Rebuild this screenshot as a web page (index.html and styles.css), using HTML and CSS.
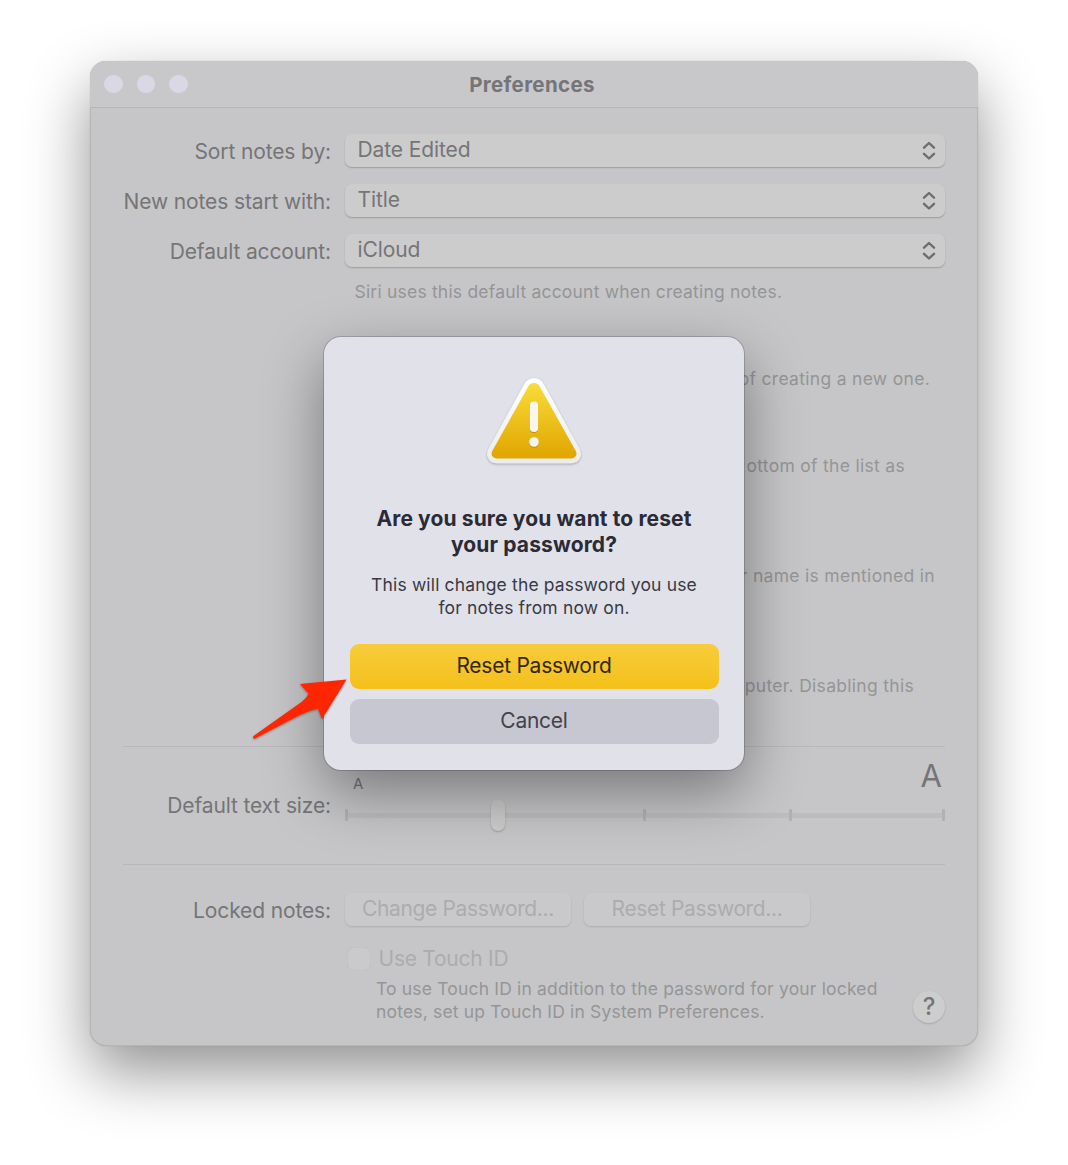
FILE: index.html
```
<!DOCTYPE html>
<html lang="en">
<head>
  <meta charset="UTF-8" />
  <meta name="viewport" content="width=device-width, initial-scale=1.0"/>
  <title>Preferences</title>
  <link rel="stylesheet" href="styles.css">
</head>
<body>

  <div class="window">
    <header class="titlebar">
      <div class="lights"><span></span><span></span><span></span></div>
      <h1>Preferences</h1>
    </header>

    <main class="content">
      <div class="row">
        <div class="label">Sort notes by:</div>
        <div class="select">
          <span>Date Edited</span>
          <svg width="14" height="20" viewBox="0 0 14 20"><path d="M2 6.700 7 2l5 4.700M2 12.800l5 4.700 5-4.700"/></svg>
        </div>
      </div>
      <div class="row">
        <div class="label">New notes start with:</div>
        <div class="select">
          <span>Title</span>
          <svg width="14" height="20" viewBox="0 0 14 20"><path d="M2 6.700 7 2l5 4.700M2 12.800l5 4.700 5-4.700"/></svg>
        </div>
      </div>
      <div class="row">
        <div class="label">Default account:</div>
        <div class="select">
          <span>iCloud</span>
          <svg width="14" height="20" viewBox="0 0 14 20"><path d="M2 6.700 7 2l5 4.700M2 12.800l5 4.700 5-4.700"/></svg>
        </div>
      </div>
      <p class="hint siri">Siri uses this default account when creating notes.</p>

      <div class="options">
        <p class="hint resume">of creating a new one.</p>
        <p class="hint sort">ottom of the list as</p>
        <p class="hint mention">r name is mentioned in</p>
        <p class="hint local">puter. Disabling this</p>
      </div>

      <section class="text-size">
        <div class="label">Default text size:</div>
        <div class="slider">
          <div class="letters"><span class="small">A</span><span class="big">A</span></div>
          <div class="track">
            <i class="tick"></i><i class="knob"></i><i class="tick"></i><i class="tick"></i><i class="tick"></i>
          </div>
        </div>
      </section>

      <section class="locked">
        <div class="row">
          <div class="label">Locked notes:</div>
          <div class="buttons">
            <div class="button">Change Password...</div>
            <div class="button">Reset Password...</div>
          </div>
        </div>
        <div class="touch">
          <span class="checkbox"></span>
          <span class="touch-label">Use Touch ID</span>
        </div>
        <div class="bottom">
          <p class="hint">To use Touch ID in addition to the password for your locked<br>notes, set up Touch ID in System Preferences.</p>
          <div class="help">?</div>
        </div>
      </section>
    </main>

    <div class="dialog">
      <svg class="warning" width="106" height="100" viewBox="0 0 106 100">
        <defs>
          <linearGradient id="yellow" x1="0" y1="0" x2="0" y2="1">
            <stop offset="0" stop-color="#f9dc3a"/>
            <stop offset="1" stop-color="#e0a500"/>
          </linearGradient>
          <linearGradient id="white" x1="0" y1="0" x2="0" y2="1">
            <stop offset="0" stop-color="#ffffff"/>
            <stop offset="1" stop-color="#ececec"/>
          </linearGradient>
        </defs>
        <path class="edge" fill="url(#white)" d="M43 12.500Q46.500 6 53 6t10 6.500L98.500 76.500Q101 81 99.500 85 97 91.500 90 91.500H16Q9 91.500 6.500 85 5 81 7.500 76.500Z"/>
        <path fill="url(#yellow)" d="M47 15Q49 11 53 11t6 4L94.500 78.500Q96.500 82 94.500 84.500 92.500 86.500 90 86.500H16Q13.500 86.500 11.500 84.500 9.500 82 11.500 78.500Z"/>
        <rect class="mark" x="49" y="29.500" width="8" height="30.500" rx="3.800"/>
        <circle class="mark" cx="53" cy="70" r="4.800"/>
      </svg>
      <h2>Are you sure you want to reset<br>your password?</h2>
      <p>This will change the password you use<br>for notes from now on.</p>
      <div class="action primary">Reset Password</div>
      <div class="action">Cancel</div>
    </div>

    <svg class="arrow" width="110" height="76" viewBox="0 0 110 76">
      <path d="M106.500 10.500 60 15 68.500 24.500Q67 29.500 58 35.500L13.500 67Q12 70 15 69.500L59 46.500Q69 41.500 78 39.500L82 50Z"/>
    </svg>
  </div>

</body>
</html>
```
FILE: styles.css
```
* {
  box-sizing: border-box;
}

body {
  margin: 0;
  padding: 61px 90px;
  height: 1165px;
  overflow: hidden;
  background: #fff;
  font-family: Inter, sans-serif;
  color: #757577;
}

h1, h2, p {
  margin: 0;
}

.window {
  position: relative;
  width: 888px;
  height: 985px;
  background: #c6c6c8;
  border-radius: 16px;
  box-shadow: inset 0 0 0 1px rgba(0, 0, 0, 0.08), 0 0 1px rgba(0, 0, 0, 0.25), 0 26px 62px rgba(0, 0, 0, 0.43);
}

.titlebar {
  display: flex;
  align-items: center;
  height: 47px;
  padding-left: 14px;
  border-bottom: 1px solid #b5b5b7;
  background: #c8c8ca;
  border-radius: 16px 16px 0 0;
}

.lights {
  display: flex;
  gap: 14px;
  width: 170px;
}

.lights span {
  width: 18.500px;
  height: 18px;
  border-radius: 50%;
  background: #d9d8e4;
}

h1 {
  width: 516px;
  text-align: center;
  font-size: 20.5px;
  font-weight: 700;
  letter-spacing: 0.35px;
}

.content {
  padding: 26px 33px 0;
}

.row {
  display: flex;
  gap: 14px;
  height: 33px;
  margin-bottom: 17px;
}

.label {
  width: 208px;
  padding-top: 4px;
  text-align: right;
  font-size: 21px;
  line-height: 27px;
  letter-spacing: -0.13px;
  white-space: nowrap;
}

.select {
  display: flex;
  justify-content: space-between;
  width: 600px;
  padding: 2px 9px 0 12.500px;
  border-radius: 7px;
  background: #cccccc;
  box-shadow: 0 1px 1.500px rgba(0, 0, 0, 0.22);
  font-size: 21px;
  line-height: 27px;
  letter-spacing: -0.1px;
}

.select svg {
  margin-top: 5px;
}

.select path {
  fill: none;
  stroke: #6e6e70;
  stroke-width: 2.400;
  stroke-linecap: round;
  stroke-linejoin: round;
}

.hint {
  font-size: 17.500px;
  line-height: 23px;
  letter-spacing: 0.2px;
  color: #959597;
  white-space: nowrap;
}

.siri {
  margin: -4px 0 0 231.500px;
}

.options {
  height: 443px;
  padding-top: 64px;
  text-align: right;
  letter-spacing: 0.3px;
}

.options .hint {
  letter-spacing: 0.3px;
}

.resume {
  padding-right: 15px;
}

.sort {
  margin-top: 64px;
  padding-right: 40px;
}

.mention {
  margin-top: 87px;
  padding-right: 10px;
}

.local {
  margin-top: 87px;
  padding-right: 31px;
}

.text-size {
  display: flex;
  gap: 14px;
  height: 119px;
  border-top: 1px solid #b8b8ba;
  border-bottom: 1px solid #b8b8ba;
}

.text-size .label {
  padding-top: 45px;
}

.slider {
  width: 600px;
}

.letters {
  display: flex;
  justify-content: space-between;
  align-items: flex-end;
  height: 48px;
  padding: 0 3px 0 8px;
}

.small {
  margin-bottom: 2px;
  font-size: 15px;
  line-height: 18px;
}

.big {
  font-size: 31px;
  line-height: 38px;
}

.track {
  display: flex;
  align-items: center;
  justify-content: space-between;
  height: 40px;
  background: linear-gradient(#bdbdbf, #bdbdbf) center / 100% 5px no-repeat;
}

.tick {
  width: 3px;
  height: 12px;
  border-radius: 1px;
  background: #b1b1b3;
}

.tick:last-child {
  margin-left: 7px;
}

.knob {
  width: 14px;
  height: 32px;
  margin-right: -5px;
  border-radius: 7px;
  background: #cccccd;
  box-shadow: 0 1px 2px rgba(0, 0, 0, 0.22);
}

.locked {
  padding-top: 28px;
}

.buttons {
  display: flex;
  gap: 13px;
}

.button {
  width: 226px;
  height: 33px;
  border-radius: 7px;
  background: #c9c9cb;
  box-shadow: 0 1px 2px rgba(0, 0, 0, 0.12);
  text-align: center;
  font-size: 21px;
  line-height: 31px;
  letter-spacing: -0.36px;
  color: #acacae;
}

.touch {
  display: flex;
  align-items: center;
  gap: 9px;
  height: 27px;
  margin: 19px 0 5px 224.500px;
  font-size: 21px;
  letter-spacing: -0.25px;
  color: #acacae;
}

.checkbox {
  width: 22px;
  height: 22px;
  border-radius: 5px;
  background: #cacacc;
  box-shadow: 0 0 1px rgba(0, 0, 0, 0.15);
}

.bottom {
  display: flex;
  justify-content: space-between;
  padding-left: 253px;
}

.bottom .hint {
  letter-spacing: 0.17px;
}

.help {
  width: 32px;
  height: 32px;
  margin-top: 14px;
  border-radius: 50%;
  background: #cdcdcd;
  box-shadow: 0 1px 2px rgba(0, 0, 0, 0.17);
  text-align: center;
  font-size: 24px;
  font-weight: 500;
  line-height: 32px;
}

/* alert over the preferences */
.dialog {
  position: absolute;
  left: 234px;
  top: 276px;
  width: 420px;
  height: 433px;
  padding: 35px 25.500px 0;
  border-radius: 17px;
  background: #e1e1ea;
  box-shadow: 0 0 0 1px rgba(0, 0, 0, 0.17), 0 22px 60px rgba(0, 0, 0, 0.4);
  text-align: center;
}

.warning {
  display: block;
  margin: 0 auto;
}

.edge {
  filter: drop-shadow(0 1px 1px rgba(0, 0, 0, 0.25));
}

.mark {
  fill: #f8f6ee;
  filter: drop-shadow(0 1px 0.500px rgba(120, 80, 0, 0.35));
}

h2 {
  margin-top: 34px;
  font-size: 21px;
  font-weight: 700;
  line-height: 26px;
  letter-spacing: 0.12px;
  color: #2b2b35;
  white-space: nowrap;
}

.dialog p {
  margin: 15px 0 25px;
  font-size: 17.500px;
  line-height: 23px;
  letter-spacing: 0.15px;
  color: #3a3a44;
  white-space: nowrap;
}

.action {
  height: 45px;
  border-radius: 9px;
  background: #c7c7d1;
  font-size: 21px;
  line-height: 43px;
  letter-spacing: -0.25px;
  color: #42424c;
}

.primary {
  margin-bottom: 10px;
  background: linear-gradient(#f7cc3c, #f4c01a);
  color: #33260a;
}

/* red pointer to the reset button */
.arrow {
  position: absolute;
  left: 150px;
  top: 608px;
  fill: #fe2600;
  filter: drop-shadow(0 1px 1px rgba(0, 0, 0, 0.35));
}
```
